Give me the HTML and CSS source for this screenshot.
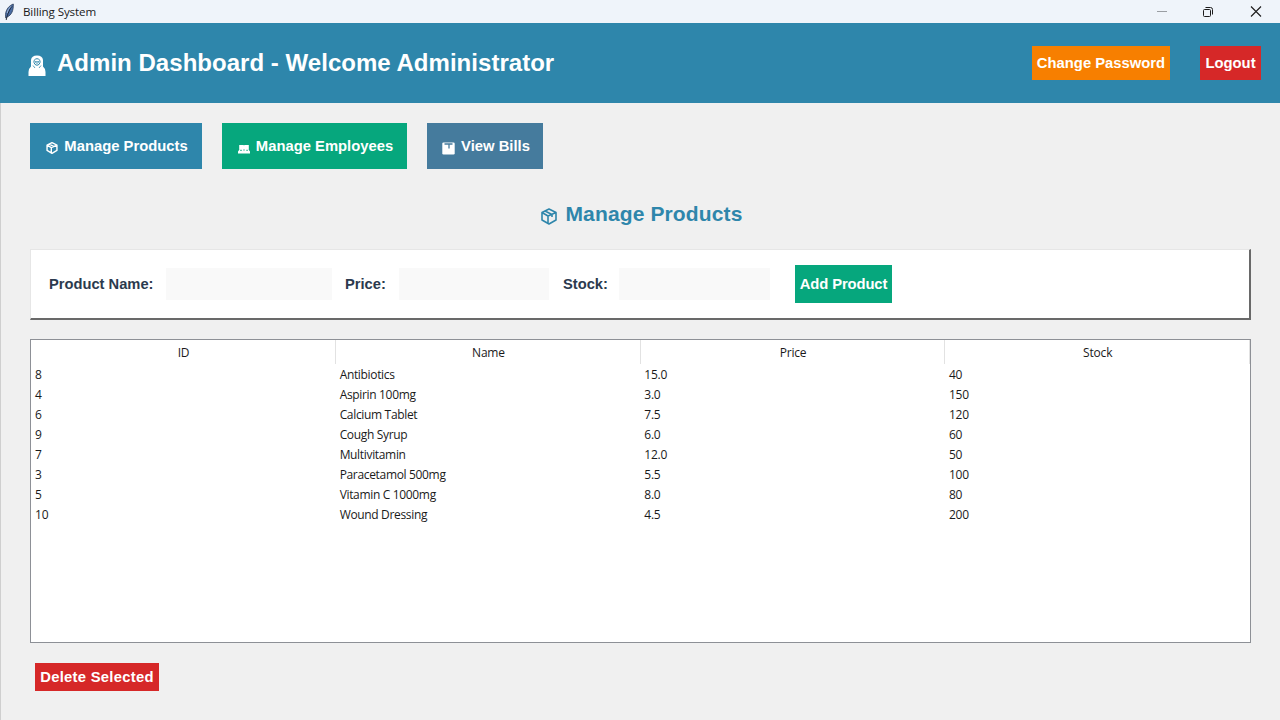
FILE: index.html
```
<!DOCTYPE html>
<html lang="en">
<head>
    <meta charset="UTF-8">
    <meta name="viewport" content="width=device-width, initial-scale=1.0">
    <title>Billing System</title>
    <link rel="stylesheet" href="styles.css">
</head>
<body>
    <!-- Window title bar -->
    <div class="titlebar">
        <svg class="feather" width="12" height="18" viewBox="0 0 12 18">
            <path d="M9.300 1C5.500 2.400 2 6 1.500 11.500L1.700 15L3.500 13.800C7.500 12 9.600 7.500 9.300 1Z" fill="#4a6da5" stroke="#2c3d59" stroke-width=".8"/>
            <path d="M8.200 3C5.600 6.500 3.800 10 2.200 17" fill="none" stroke="#17202e" stroke-width=".9"/>
            <path d="M7.200 3.200C5.100 5 3.500 7.500 3.200 10" fill="none" stroke="#a9bfe0" stroke-width=".9"/>
        </svg>
        <span class="titlebar-text">Billing System</span>
        <div class="window-controls">
            <svg width="12" height="12" viewBox="0 0 12 12"><path d="M1 5.500H11" stroke="#9a9ea3"/></svg>
            <svg width="12" height="12" viewBox="0 0 12 12" fill="none" stroke="#1c1c1c"><rect x=".5" y="3.500" width="7" height="7" rx="1"/><path d="M2.500 1.500H7.500Q9.500 1.500 9.500 3.500V8.500"/></svg>
            <svg width="12" height="12" viewBox="0 0 12 12" stroke="#1c1c1c" stroke-width="1.100"><path d="M1 .5L11 10.500M11 .5L1 10.500"/></svg>
        </div>
    </div>

    <div class="window">
        <header class="header">
            <svg class="admin-icon" width="18" height="22" viewBox="0 0 18 22">
                <path d="M3 11.500V5Q3.500 .4 9 .4T15 5V11.500Q17.500 13.500 17.500 17V21H.5V17Q.5 13.500 3 11.500Z" fill="#fff"/>
                <path d="M6 5.500Q9 1.800 12 5.500V7.500Q11.500 10 9 10.300Q6.500 10 6 7.500Z" fill="none" stroke="#2e86ab" stroke-width="1"/>
                <path d="M7 6.700H11L9 8.500ZM5 10.500L7 13M13 10.500L11 13" fill="none" stroke="#2e86ab" stroke-width=".8"/>
            </svg>
            <h1>Admin Dashboard - Welcome Administrator</h1>
            <button class="btn orange change-password">Change Password</button>
            <button class="btn red logout">Logout</button>
        </header>

        <nav class="nav">
            <button class="btn blue products">
                <svg width="12" height="12" viewBox="0 0 16 17" fill="none" stroke="currentColor" stroke-width="2" stroke-linejoin="round"><path d="M8 1L15 4.500V12L8 16L1 12V4.500ZM1 4.500L7 8L15 4.500M7 8V15.500M4 3L11 6.500"/></svg>
                <span>Manage Products</span>
            </button>
            <button class="btn green employees">
                <svg width="12" height="10" viewBox="0 0 12 10" fill="currentColor"><path d="M1.200 1H5.500L6 1.500L6.500 1H10.800V5.500H10.500L12 7.500V9.500H0V7.500L1.500 5.500H1.200Z"/><path d="M2 6.300H4M5.200 6H6.800M8.200 6.300H10" stroke="#06a77d" stroke-width=".8"/></svg>
                <span>Manage Employees</span>
            </button>
            <button class="btn slate bills">
                <svg width="13" height="13" viewBox="0 0 13 13"><rect x=".3" y=".5" width="12.400" height="12" rx="1.200" fill="#fff"/><path d="M2.500 2H10.500M7 2V6.500" fill="none" stroke="#457b9d" stroke-width="1.300"/></svg>
                <span>View Bills</span>
            </button>
        </nav>

        <h2 class="section-title">
            <svg width="16" height="17" viewBox="0 0 16 17" fill="none" stroke="currentColor" stroke-width="1.600" stroke-linejoin="round"><path d="M8 1L15 4.500V12L8 16L1 12V4.500ZM1 4.500L7 8L15 4.500M7 8V15.500M4 3L11 6.500V9"/></svg>
            <span>Manage Products</span>
        </h2>

        <form class="product-form">
            <label class="label-name" for="name">Product Name:</label>
            <input class="input-name" id="name" type="text">
            <label class="label-price" for="price">Price:</label>
            <input class="input-price" id="price" type="text">
            <label class="label-stock" for="stock">Stock:</label>
            <input class="input-stock" id="stock" type="text">
            <button class="btn green add" type="button">Add Product</button>
        </form>

        <div class="table-box">
            <table>
                <thead>
                    <tr><th>ID</th><th>Name</th><th>Price</th><th>Stock</th></tr>
                </thead>
                <tbody>
                    <tr><td>8</td><td>Antibiotics</td><td>15.0</td><td>40</td></tr>
                    <tr><td>4</td><td>Aspirin 100mg</td><td>3.0</td><td>150</td></tr>
                    <tr><td>6</td><td>Calcium Tablet</td><td>7.5</td><td>120</td></tr>
                    <tr><td>9</td><td>Cough Syrup</td><td>6.0</td><td>60</td></tr>
                    <tr><td>7</td><td>Multivitamin</td><td>12.0</td><td>50</td></tr>
                    <tr><td>3</td><td>Paracetamol 500mg</td><td>5.5</td><td>100</td></tr>
                    <tr><td>5</td><td>Vitamin C 1000mg</td><td>8.0</td><td>80</td></tr>
                    <tr><td>10</td><td>Wound Dressing</td><td>4.5</td><td>200</td></tr>
                </tbody>
            </table>
        </div>

        <button class="btn red delete">Delete Selected</button>
    </div>
</body>
</html>
```
FILE: styles.css
```
* {
    box-sizing: border-box;
}

body {
    margin: 0;
    height: 720px;
    overflow: hidden;
    display: flex;
    flex-direction: column;
    background-color: #f0f0f0;
    font-family: "Liberation Sans", Arial, sans-serif;
}

svg {
    display: block;
    flex-shrink: 0;
}

/* Title bar */
.titlebar {
    display: flex;
    align-items: center;
    height: 23px;
    padding: 0 18px 0 4px;
    background-color: #eff4fa;
    flex-shrink: 0;
}

.titlebar-text {
    margin-left: 7px;
    font: 11.6px "Open Sans", "Noto Sans", sans-serif;
    letter-spacing: -0.12px;
    color: #1a1a1a;
}

.window-controls {
    display: flex;
    gap: 35px;
    margin-left: auto;
}

.window {
    flex: 1;
    border-left: 1px solid #cfcfcf;
}

/* Buttons */
.btn {
    display: flex;
    align-items: center;
    justify-content: center;
    padding: 0;
    border: none;
    color: #fff;
    font: bold 14.8px "Liberation Sans", Arial, sans-serif;
    white-space: nowrap;
}

.blue { background-color: #2e86ab; }
.green { background-color: #06a77d; }
.slate { background-color: #457b9d; }
.orange { background-color: #f77f00; }
.red { background-color: #d62828; }

/* Header */
.header {
    display: flex;
    align-items: center;
    height: 80px;
    margin-left: -1px;
    padding: 0 19px 0 28px;
    background-color: #2e86ab;
}

.admin-icon {
    margin-top: 5px;
}

.header h1 {
    margin: 0 auto 0 11px;
    font-size: 24px;
    line-height: 30px;
    letter-spacing: 0.03px;
    color: #fff;
    white-space: nowrap;
}

.change-password {
    width: 138px;
    height: 34px;
    margin-right: 30px;
}

.logout {
    width: 61px;
    height: 34px;
}

/* Section buttons */
.nav {
    display: flex;
    gap: 20px;
    padding: 20px 29px 0;
}

.nav .btn {
    height: 46px;
    gap: 6px;
    padding-left: 2px;
}

.nav svg {
    margin-top: 4px;
}

.nav .employees svg {
    margin-top: 6px;
}

.products { width: 172px; }
.employees { width: 185px; }
.bills { width: 116px; }

.section-title {
    display: flex;
    align-items: center;
    justify-content: center;
    gap: 9px;
    height: 30px;
    margin: 30px 0 0;
    padding-left: 2px;
    font-size: 21px;
    letter-spacing: 0.13px;
    color: #2e86ab;
}

.section-title svg {
    margin-top: 5px;
}

/* Product form */
.product-form {
    display: flex;
    align-items: center;
    width: 1221px;
    height: 71px;
    margin: 20px 0 0 29px;
    padding-left: 18px;
    background-color: #fff;
    border: 1px solid #e6e6e6;
    border-right: 2px solid #696969;
    border-bottom: 2px solid #696969;
    font-size: 14.7px;
    font-weight: bold;
    color: #2b3a4e;
}

.product-form input {
    height: 32px;
    padding: 0 5px;
    border: none;
    background-color: #f9f9f9;
}

.label-name { width: 117px; }
.label-price { width: 54px; }
.label-stock { width: 56px; }

.product-form .input-name {
    width: 166px;
    margin-right: 13px;
}

.product-form .input-price {
    width: 150px;
    margin-right: 14px;
}

.product-form .input-stock {
    width: 151px;
    margin-right: 25px;
}

.add {
    width: 97px;
    height: 38px;
    letter-spacing: -0.1px;
}

/* Product table */
.table-box {
    width: 1221px;
    height: 304px;
    margin: 19px 0 0 29px;
    background-color: #fff;
    border: 1px solid #8d9096;
}

table {
    width: 1219px;
    table-layout: fixed;
    border-collapse: collapse;
    font: 12px "Open Sans", "Noto Sans", sans-serif;
    letter-spacing: -0.2px;
    color: #1a1a1a;
}

th {
    height: 24px;
    padding: 0 0 0 1px;
    border-right: 1px solid #e2e2e2;
    font-weight: normal;
}

td {
    height: 20px;
    padding: 1px 4px 0;
    line-height: 18px;
}

td:nth-child(2) {
    letter-spacing: -0.33px;
}

.delete {
    width: 124px;
    height: 28px;
    margin: 20px 0 0 34px;
    letter-spacing: 0.28px;
}
```
